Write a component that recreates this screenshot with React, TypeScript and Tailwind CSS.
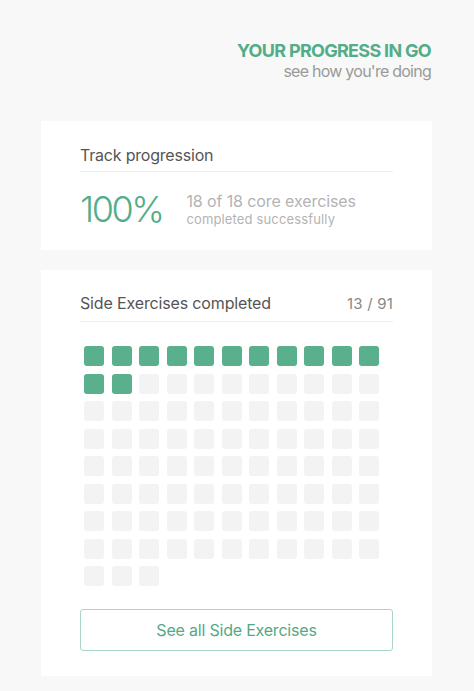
import React from 'react';

const TOTAL = 91;
const DONE = 13;

function App() {
  const cells = Array.from({ length: TOTAL }, (_, i) => i < DONE);

  return (
    <div className="min-h-screen bg-[#f8f8f8] px-[41px] pt-[41px] pb-4 font-['Inter',sans-serif]">
      {/* Header */}
      <header className="text-right pr-[2px]">
        <h1 className="text-[18px] leading-[20px] font-bold text-[#52ad88] tracking-[-0.7px]">YOUR PROGRESS IN GO</h1>
        <p className="text-[16px] leading-[20px] text-[#9a9a9a] tracking-[-0.75px]">see how you're doing</p>
      </header>

      {/* Track progression */}
      <section className="mt-[40px] bg-white px-[39px] pt-[22px] pb-[21px] mr-px">
        <h2 className="text-[16px] leading-[24px] text-[#555] tracking-[-0.2px] pb-[4px] border-b border-[#efefef]">Track progression</h2>
        <div className="mt-[17px] flex items-center">
          <span className="text-[36px] leading-[40px] font-light text-[#52ad88] tracking-[-2.5px]">100%</span>
          <div className="ml-[24px] flex flex-col">
            <span className="text-[16px] leading-[20px] text-[#b3b3b3] tracking-[-0.1px]">18 of 18 core exercises</span>
            <span className="text-[13px] leading-[16px] text-[#b3b3b3] tracking-[0.15px]">completed successfully</span>
          </div>
        </div>
      </section>

      {/* Side exercises */}
      <section className="mt-[20px] bg-white px-[39px] pt-[21px] pb-[25px] mr-px">
        <div className="flex items-baseline justify-between pb-[5px] border-b border-[#efefef]">
          <h2 className="text-[16px] leading-[24px] text-[#555] tracking-[-0.15px]">Side Exercises completed</h2>
          <span className="text-[15px] leading-[24px] text-[#888] tracking-[0.2px]">13 / 91</span>
        </div>
        <div className="mt-[24px] pl-[4px] grid grid-cols-[repeat(11,20px)] gap-x-[7.5px] gap-y-[7.5px]">
          {cells.map((done, i) => (
            <div
              key={i}
              className={done ? 'w-[20px] h-[20px] rounded-[3px] bg-[#5aaf8c]' : 'w-[20px] h-[20px] rounded-[3px] bg-[#f3f3f3]'}
            />
          ))}
        </div>
        <button className="mt-[23px] w-full h-[42px] border border-[#a9d6c4] rounded-[3px] text-[16px] text-[#55a886] tracking-[-0.2px]">
          See all Side Exercises
        </button>
      </section>
    </div>
  );
}

export default App;
